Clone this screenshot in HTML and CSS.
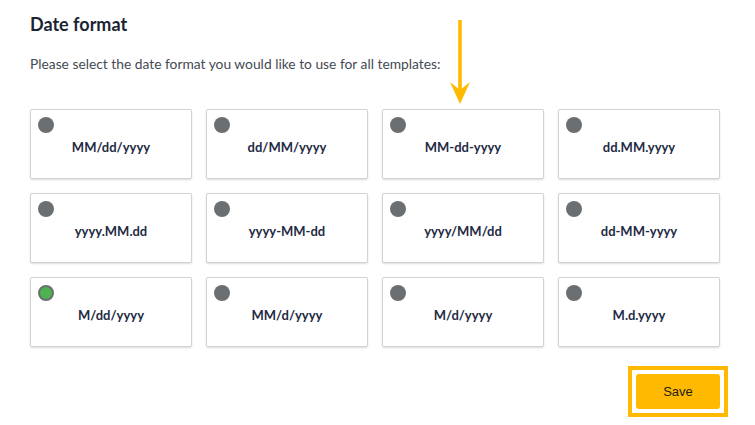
FILE: index.html
```html
<!DOCTYPE html>
<html lang="en">
<head>
<meta charset="utf-8">
<title>Date format</title>
<link rel="stylesheet" href="styles.css">
</head>
<body>
<main class="page">
  <h1 class="title">Date format</h1>
  <p class="intro">Please select the date format you would like to use for all templates:</p>
  <div class="grid">
    <label class="card"><span class="radio"></span><span class="label">MM/dd/yyyy</span></label>
    <label class="card"><span class="radio"></span><span class="label">dd/MM/yyyy</span></label>
    <label class="card"><span class="radio"></span><span class="label">MM-dd-yyyy</span></label>
    <label class="card"><span class="radio"></span><span class="label">dd.MM.yyyy</span></label>
    <label class="card"><span class="radio"></span><span class="label">yyyy.MM.dd</span></label>
    <label class="card"><span class="radio"></span><span class="label">yyyy-MM-dd</span></label>
    <label class="card"><span class="radio"></span><span class="label">yyyy/MM/dd</span></label>
    <label class="card"><span class="radio"></span><span class="label">dd-MM-yyyy</span></label>
    <label class="card"><span class="radio radio-on"></span><span class="label">M/dd/yyyy</span></label>
    <label class="card"><span class="radio"></span><span class="label">MM/d/yyyy</span></label>
    <label class="card"><span class="radio"></span><span class="label">M/d/yyyy</span></label>
    <label class="card"><span class="radio"></span><span class="label">M.d.yyyy</span></label>
  </div>
  <div class="actions">
    <span class="focus-ring"><button class="save" type="button">Save</button></span>
  </div>
  <svg class="arrow" width="20" height="86" viewBox="0 0 20 86" aria-hidden="true">
    <rect x="8.2" y="0" width="3.6" height="70" fill="#ffb900"/>
    <path d="M0 62 L10 84 L20 62 L10 70 Z" fill="#ffb900"/>
  </svg>
</main>
</body>
</html>
```
FILE: styles.css
```css
html, body {
  margin: 0;
  padding: 0;
  background: #ffffff;
}

.page {
  position: relative;
  width: 690px;
  padding: 14px 0 0 30px;
  font-family: Lato, "Open Sans", sans-serif;
}

.title {
  margin: 0;
  font-size: 18px;
  line-height: 20px;
  font-weight: 700;
  color: #1b2532;
}

.intro {
  margin: 22px 0 0 0;
  font-size: 13.8px;
  line-height: 16px;
  color: #434a52;
}

.grid {
  margin-top: 37px;
  display: grid;
  grid-template-columns: repeat(4, 162px);
  grid-auto-rows: 70px;
  gap: 14px;
}

.card {
  box-sizing: border-box;
  display: flex;
  flex-direction: column;
  padding: 7px;
  border: 1px solid #d3d3d3;
  border-radius: 2px;
  box-shadow: 0 1px 2px rgba(0, 0, 0, 0.14);
  background: #fff;
}

.radio {
  box-sizing: border-box;
  width: 16px;
  height: 16px;
  border-radius: 50%;
  background: #6b6f72;
}

.radio-on {
  border: 2px solid #6b6f72;
  background: #4db24f;
}

.label {
  margin-top: 6px;
  text-align: center;
  font-size: 13px;
  line-height: 17px;
  font-weight: 700;
  color: #1f2b44;
}

.actions {
  display: flex;
  justify-content: flex-end;
  margin-top: 19px;
  margin-right: -8px;
}

.focus-ring {
  display: flex;
  padding: 4px;
  border: 4px solid #ffb900;
}

.save {
  width: 84px;
  height: 35px;
  border: none;
  border-radius: 3px;
  background: #ffb900;
  color: #1d1d1d;
  font-family: "Liberation Sans", Arial, sans-serif;
  font-size: 13px;
}

.arrow {
  position: absolute;
  left: 450px;
  top: 20px;
}
```
